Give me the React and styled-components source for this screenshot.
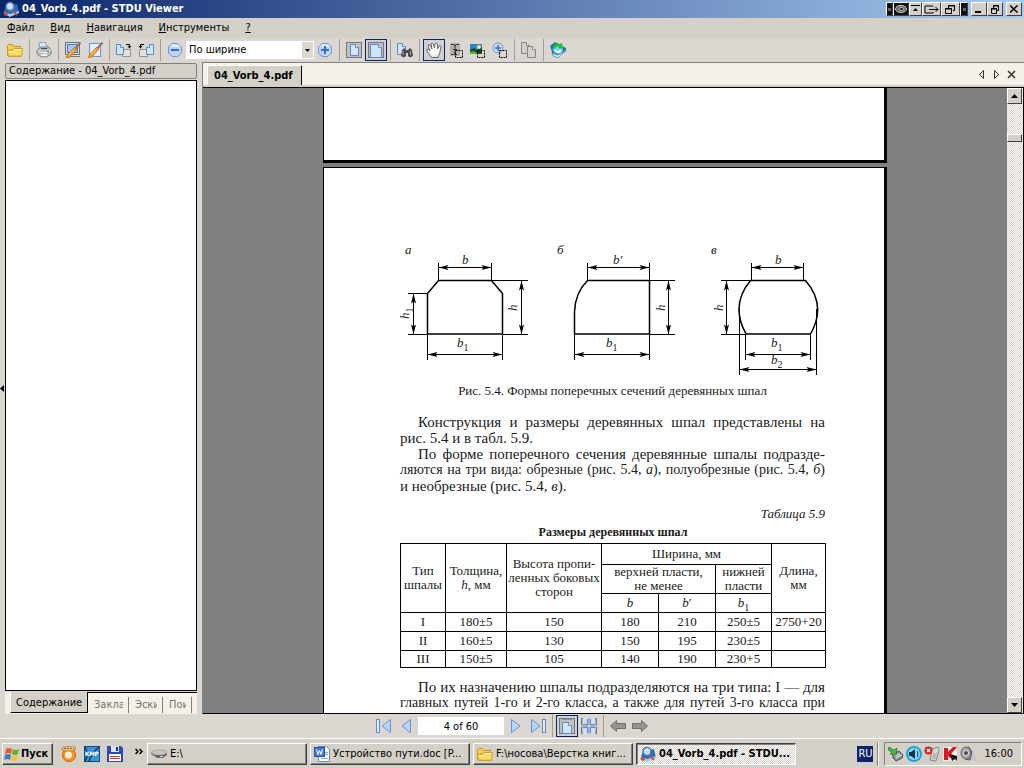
import React from 'react';
import styled, { createGlobalStyle } from 'styled-components';

const face = '#d4d0c8';
const bar = '#dbd6cf';
const cream = '#f5f0e8';
const shade = '#808080';
const checker = 'repeating-conic-gradient(#fff 0% 25%, #d4d0c8 0% 50%) 0 0 / 2px 2px';

const GlobalStyle = createGlobalStyle`
  * { box-sizing: border-box; }
  body { margin: 0; }
  body, button, input, select {
    font-family: 'DejaVu Sans Condensed', 'DejaVu Sans', Tahoma, sans-serif;
    font-size: 11px;
    line-height: 14px;
    color: #000;
  }
  button { border: 0; padding: 0; background: none; white-space: nowrap; }
  svg { display: block; flex: none; }
`;

const Window = styled.div`
  display: flex;
  flex-direction: column;
  height: 100vh;
  overflow: hidden;
  background: ${bar};
`;

/* title bar */

const TitleBar = styled.header`
  display: flex;
  align-items: center;
  gap: 3px;
  height: 18px;
  padding: 0 2px 0 3px;
  background: linear-gradient(90deg, #0a246a, #a6caf0);
`;

const Title = styled.h1`
  flex: 1;
  margin: 0;
  font-size: 11px;
  line-height: 16px;
  color: #fff;
  white-space: nowrap;
`;

const ButtonGroup = styled.div`
  display: flex;
`;

const CaptionButton = styled.button`
  display: flex;
  align-items: center;
  justify-content: center;
  width: ${({ $width }) => $width || 16}px;
  height: 14px;
  background: ${({ $dark }) => ($dark ? '#111' : face)};
  border: 1px solid;
  border-color: #fff #404040 #404040 #fff;
`;

/* menu and toolbar */

const MenuBar = styled.nav`
  display: flex;
  align-items: center;
  gap: 16px;
  height: 20px;
  padding: 0 7px;
  background: ${face};
`;

const Toolbar = styled.div`
  display: flex;
  align-items: center;
  height: 24px;
  padding-left: 4px;
  background: ${bar};
`;

const ToolButton = styled.button`
  display: flex;
  align-items: center;
  justify-content: center;
  width: 22px;
  height: 22px;
  border: 1px solid ${({ $active }) => ($active ? '#0a246a' : 'transparent')};
  background: ${({ $active }) => ($active ? '#d0d0d2' : 'transparent')};
`;

const Separator = styled.span`
  width: 1px;
  height: 22px;
  margin: 0 3px;
  background: #a09d98;
`;

const SelectBox = styled.div`
  position: relative;
  width: 128px;
  height: 18px;
`;

const ZoomSelect = styled.select`
  appearance: none;
  width: 100%;
  height: 18px;
  padding: 0 3px;
  border: 0;
  border-radius: 0;
  background: #fff;
`;

const SelectArrow = styled.span`
  position: absolute;
  top: 1px;
  right: 1px;
  display: flex;
  align-items: center;
  justify-content: center;
  width: 11px;
  height: 16px;
  background: ${bar};
  pointer-events: none;
`;

/* work area */

const Work = styled.main`
  display: flex;
  flex: 1;
  min-height: 0;
`;

const Collapse = styled.button`
  display: flex;
  align-items: center;
  width: 5px;
`;

const SidePanel = styled.aside`
  display: flex;
  flex-direction: column;
  width: 192px;
  margin-right: 5px;
  padding-top: 1px;
`;

const SideHeader = styled.div`
  height: 16px;
  padding-left: 3px;
  border: 1px solid ${shade};
  border-radius: 2px;
  background: ${face};
  white-space: nowrap;
`;

const SideTree = styled.div`
  flex: 1;
  margin: 1px 0;
  border: 1px solid #000;
  background: #fff;
`;

const SideTabs = styled.div`
  display: flex;
  height: 22px;
  padding-left: 5px;
  background: ${cream};
`;

const SideTab = styled.button`
  display: flex;
  align-items: center;
  flex: none;
  width: ${({ $width }) => $width}px;
  height: ${({ $active }) => ($active ? 21 : 22)}px;
  padding-top: 2px;
  padding-left: ${({ $active }) => ($active ? 5 : 6)}px;
  color: ${({ $active }) => ($active ? '#000' : '#77736c')};
  background: ${({ $active }) => ($active ? face : 'transparent')};
  border-style: solid;
  border-width: ${({ $active }) => ($active ? '0 1px 1px 1px' : '1px 0 0 0')};
  border-color: #000 #000 #000 ${({ $active }) => ($active ? '#fff' : '#000')};
`;

const TabText = styled.span`
  flex: 1;
  overflow: hidden;
  text-align: left;
`;

const TabDivider = styled.span`
  width: 1px;
  height: 16px;
  margin: 0 0 0 5px;
  background: ${shade};
`;

const TabFiller = styled.span`
  flex: 1;
  border-top: 1px solid #000;
`;

const DocPanel = styled.section`
  display: flex;
  flex-direction: column;
  flex: 1;
  min-width: 0;
  border-left: 1px solid ${shade};
`;

const DocTabs = styled.div`
  display: flex;
  align-items: flex-end;
  justify-content: space-between;
  height: 25px;
  padding: 0 8px 0 4px;
  border-top: 1px solid ${shade};
  border-bottom: 2px solid ${face};
  background: ${cream};
`;

const DocTab = styled.button`
  height: 20px;
  padding: 0 8px 0 6px;
  font-weight: bold;
  background: ${face};
  border-style: solid;
  border-width: 1px 1px 0 1px;
  border-color: #fff #000 #fff #fff;
`;

const DocActions = styled.div`
  display: flex;
  gap: 6px;
  align-self: center;
`;

const View = styled.div`
  display: flex;
  flex: 1;
  min-height: 0;
  border: solid #000;
  border-width: 1px 1px 1px 0;
  background: ${shade};
`;

const Pages = styled.div`
  flex: 1;
  display: flex;
  flex-direction: column;
  align-items: center;
  gap: 4px;
  overflow: hidden;
`;

const Sheet = styled.article`
  flex: none;
  width: 564px;
  border: solid #000;
  border-width: ${({ $first }) => ($first ? 0 : 1)}px 3px 3px 1px;
  padding: ${({ $first }) => ($first ? '72px 0 0' : '75px 59px 60px 76px')};
  background: #fff;
  font-family: 'Liberation Serif', 'Times New Roman', serif;
  font-size: 15px;
  line-height: 16px;
  color: #1a1a1a;
`;

const ScrollBar = styled.div`
  display: flex;
  flex-direction: column;
  width: 16px;
  background: ${checker};
`;

const raised = `
  border: 1px solid;
  border-color: #fff #404040 #404040 #fff;
  background: ${face};
`;

const ScrollButton = styled.button`
  display: flex;
  align-items: center;
  justify-content: center;
  width: 15px;
  height: 16px;
  ${raised}
`;

const ScrollTrack = styled.div`
  flex: 1;
  padding-top: 30px;
`;

const ScrollThumb = styled.div`
  width: 15px;
  height: 8px;
  ${raised}
`;

/* document */

const Caption = styled.figcaption`
  margin-top: 6px;
  font-size: 13px;
  text-align: center;
`;

const Figure = styled.figure`
  margin: 0;
`;

const Paragraph = styled.p`
  margin: ${({ $top }) => $top || 0}px 0 0;
  text-indent: 18px;
`;

const Line = styled.span`
  display: block;
  font-size: ${({ $tight }) => ($tight ? 14 : 15)}px;
  white-space: nowrap;
  text-align: justify;
  text-align-last: ${({ $last }) => ($last ? 'left' : 'justify')};

  & + & { text-indent: 0; }
`;

const TableNumber = styled.p`
  margin: 12px 0 0;
  font-size: 13px;
  font-style: italic;
  text-align: right;
`;

const SizeTable = styled.table`
  width: 425px;
  margin-top: 2px;
  table-layout: fixed;
  border-collapse: collapse;
  font-size: 13px;
  line-height: 14px;

  caption { height: 19px; font-size: 12px; line-height: 16px; font-weight: bold; }
  th, td {
    height: 19px;
    padding: 0;
    border: 1px solid #000;
    font-weight: normal;
    text-align: center;
    white-space: nowrap;
  }
  thead tr:first-child th { height: 21px; }
  tbody tr:last-child td { height: 17px; }
  sub { font-size: 10px; line-height: 1px; }
`;

/* page bar */

const PageBar = styled.div`
  display: flex;
  align-items: center;
  justify-content: center;
  height: 24px;
`;

const PageInput = styled.input`
  width: 86px;
  height: 18px;
  margin: 0 1px;
  border: 0;
  text-align: center;
  background: #fff;
`;

/* taskbar */

const TaskBar = styled.footer`
  display: flex;
  align-items: center;
  height: 30px;
  padding: 1px 2px 0;
  border-top: 1px solid #fff;
  background: ${face};
`;

const StartButton = styled.button`
  display: flex;
  align-items: center;
  gap: 1px;
  width: 51px;
  height: 22px;
  padding-left: 1px;
  font-weight: bold;
  ${raised}
  box-shadow: inset -1px -1px ${shade};
`;

const QuickLaunch = styled.div`
  display: flex;
  align-items: center;
  gap: 7px;
  width: 94px;
  padding-left: 8px;
`;

const QuickButton = styled.button`
  display: flex;
`;

const TaskList = styled.div`
  display: flex;
  flex: 1;
  gap: 3px;
  min-width: 0;
`;

const TaskButton = styled.button`
  display: flex;
  align-items: center;
  gap: 3px;
  width: 160px;
  height: 22px;
  padding: 0 3px;
  ${raised}
  box-shadow: inset -1px -1px ${shade};
  ${({ $active }) => $active && `
    font-weight: bold;
    background: ${checker};
    border-color: #404040 #fff #fff #404040;
    box-shadow: inset 1px 1px ${shade};
  `}
`;

const TaskText = styled.span`
  overflow: hidden;
  text-align: left;
`;

const Language = styled.button`
  width: 16px;
  height: 16px;
  color: #fff;
  background: #0a246a;
`;

const TrayGrip = styled.span`
  width: 2px;
  height: 24px;
  margin: 0 5px 0 4px;
  border-left: 1px solid ${shade};
  border-right: 1px solid #fff;
`;

const Tray = styled.div`
  display: flex;
  align-items: center;
  gap: 2px;
  height: 24px;
  padding: 0 8px 0 3px;
  border: 1px solid;
  border-color: ${shade} #fff #fff ${shade};

  time { padding-left: 6px; }
`;

/* icons */

const Svg = ({ w = 16, h = 16, children }) => (
  <svg width={w} height={h} viewBox={`0 0 ${w} ${h}`} aria-hidden="true">{children}</svg>
);

const PageShape = ({ x, y, w, h, gray }) => (
  <g fill={gray ? '#d4d0cc' : '#cfe6ff'} stroke={gray ? '#8a8886' : '#5f86d0'}>
    <path d={`M${x + 0.5} ${y + 0.5}H${x + w - 3.5}L${x + w - 0.5} ${y + 3.5}V${y + h - 0.5}H${x + 0.5}Z`} />
    <path d={`M${x + w - 3.5} ${y + 0.5}V${y + 3.5}H${x + w - 0.5}`} fill="#fff" />
  </g>
);

const AppIcon = () => (
  <Svg>
    <path d="M3 5L14 3L16 12L7 15L1 11Z" fill="#276eb8" />
    <path d="M1 11L7 13L16 10V12L7 16L1 13Z" fill="#9ed0f4" />
    <path d="M0 12L4 11L5 14L2 15Z" fill="#cf4238" />
    <path d="M9 9L14 14" stroke="#b45a50" strokeWidth="2" />
    <circle cx="7" cy="5.500" r="4" fill="#bfdcf8" stroke="#5973a4" strokeWidth="1.500" />
    <path d="M5 5Q6 3 8 3" stroke="#fff" fill="none" />
  </Svg>
);

const FolderIcon = () => (
  <Svg>
    <path d="M.5 13.500V3.500L1.500 2.500H5.500L7 4.500H13.500V8H3L1.500 13.500Z" fill="#f3cd50" stroke="#c8961c" />
    <path d="M1.500 14.500L.5 8.500H5.500L7 6.500H15.500L14.500 14.500Z" fill="#fbdc66" stroke="#cfa02a" />
    <path d="M2 9.500H6L7.500 7.500H14.500" stroke="#fff4b8" fill="none" />
    <path d="M2 13.500H14" stroke="#efc23e" />
  </Svg>
);

const PrinterIcon = () => (
  <Svg>
    <path d="M4 7L3 1L9 0L12 6Z" fill="#d9eaff" stroke="#7b98c8" />
    <path d="M1 8L5 5L13 5L15 8V12L11 15H5L1 12Z" fill="#b9babd" stroke="#88898d" />
    <path d="M2 8.500L6 10.500H11L14.500 8" stroke="#f4f4f4" fill="none" />
    <path d="M5 6.500H11" stroke="#4e5055" />
    <path d="M5 13H11" stroke="#eee" strokeWidth="2" />
    <path d="M11 9.500h2" stroke="#4c9a48" />
  </Svg>
);

const Brush = () => (
  <g>
    <path d="M15.500 0.500L9 8" stroke="#8d6c62" strokeWidth="2" />
    <path d="M10 5L12 7L5 15L1 16L3 12Z" fill="#f59a2c" stroke="#c9650d" strokeWidth=".7" />
    <path d="M9 8L4 13" stroke="#ffd089" />
  </g>
);

const EditScreenIcon = () => (
  <Svg>
    <rect x=".5" y=".5" width="14" height="12" fill="#dcdcdc" stroke="#6a7180" />
    <rect x="2.500" y="2.500" width="10" height="8" fill="#9cc9f8" stroke="#4a76b8" />
    <path d="M1 14.500H15" stroke="#777" />
    <Brush />
  </Svg>
);

const EditPageIcon = () => (
  <Svg>
    <rect x="2.500" y="1.500" width="11" height="13" fill="#e3f1ff" stroke="#6d95da" />
    <Brush />
  </Svg>
);

const RotateIcon = ({ left }) => (
  <Svg>
    <g transform={left ? 'translate(16 0) scale(-1 1)' : undefined}>
      <path d="M6.500 7.500H14.500V14.500H6.500Z" fill="#e6e3df" stroke="#96938e" />
      <PageShape x={0} y={2} w={8} h={11} />
      <path d="M10 2.500H13.500V5" stroke="#000" fill="none" />
      <path d="M11.500 4H15.500L13.500 6.500Z" />
    </g>
  </Svg>
);

const CircleIcon = ({ plus }) => (
  <Svg>
    <path d="M5 1.500H11L14.500 5V11L11 14.500H5L1.500 11V5Z" fill="#b8d6fb" stroke="#7496d4" />
    <path d="M5 2.500H11L13 5H3Z" fill="#e1efff" />
    <path d={plus ? 'M4 8H12M8 4V12' : 'M4 8H12'} stroke="#4169bd" strokeWidth="2" />
  </Svg>
);

const FitIcon = ({ wide }) => (
  <Svg>
    <rect x=".5" y=".5" width="15" height="15" fill="#c2bfbb" stroke="#77777a" />
    {wide ? <PageShape x={2} y={2} w={12} h={14} /> : <PageShape x={4} y={2} w={9} h={12} />}
  </Svg>
);

const FindIcon = () => (
  <Svg>
    <PageShape x={0} y={1} w={9} h={12} />
    <path d="M4 14L5 8L7 6L9 8H11L13 6L15 8L16 14L13 15.500L11 14V11H9V14L7 15.500Z" fill="#4b4b50" />
    <path d="M6 9V13M13.500 9V13" stroke="#aaa" />
  </Svg>
);

const HandIcon = () => (
  <Svg>
    <path d="M5 15L1 9Q0 7 2 7L4 9L2 4Q2 2 4 3L6 7L5 2Q6 0 7.500 2L8.500 6L9 2Q10 0 11.500 2V7L13 4Q15 3 15 5L13.500 12L12 15.500H6Z" fill="#fbfbfb" stroke="#686868" />
    <path d="M7 14H12L13 11" stroke="#c4c4c4" fill="none" />
  </Svg>
);

const SelectMark = () => (
  <rect x="7.500" y="8.500" width="7" height="7" fill="none" stroke="#000" strokeDasharray="2 1" />
);

const TextSelectIcon = () => (
  <Svg>
    <path d="M2 1H12V14H2Z" fill="#b5b2ae" />
    <path d="M3 2.500H5.500Q7 2.500 7 4V11Q7 12.500 5.500 12.500H3M11 2.500H8.500Q7 2.500 7 4M7 11V12.500H9M5 7.500H9" fill="none" stroke="#333" />
    <SelectMark />
  </Svg>
);

const ImageSelectIcon = () => (
  <Svg>
    <rect x="0" y="2" width="12" height="10" fill="#2f80d0" />
    <path d="M0 8L4 6L7 8L12 5V12H0Z" fill="#154d23" />
    <path d="M0 10L4 9L8 12H0Z" fill="#55b936" />
    <circle cx="9" cy="5" r="2" fill="#ffe88b" />
    <SelectMark />
  </Svg>
);

const ZoomSelectIcon = () => (
  <Svg>
    <circle cx="6" cy="6" r="5" fill="#c7ddfb" stroke="#7393cf" />
    <path d="M3 6H9M6 3V9" stroke="#4169bd" strokeWidth="1.500" />
    <SelectMark />
  </Svg>
);

const CopyIcon = () => (
  <Svg>
    <PageShape x={0} y={0} w={9} h={12} gray />
    <PageShape x={6} y={4} w={9} h={12} gray />
  </Svg>
);

const RefreshIcon = () => (
  <Svg>
    <path d="M0 4L5 0L16 6V9L8 15L3 13Z" fill="#2375ac" />
    <path d="M2 11L8 13L16 8L8 16L3 14Z" fill="#cceaf5" stroke="#3784b5" strokeWidth=".7" />
    <circle cx="8" cy="7" r="5" fill="#70d8ed" />
    <path d="M3 6Q5 0 10 2L12 1L13 7L8 6L9 4Q6 4 5 7Z" fill="#23bd31" />
    <path d="M5 8Q8 12 11 8" fill="none" stroke="#fff" strokeWidth="2" />
  </Svg>
);

const NavIcon = ({ end, flip }) => (
  <Svg>
    <g transform={flip ? 'translate(16 0) scale(-1 1)' : undefined}>
      {end && <rect x=".5" y="1.500" width="3" height="13" fill="#dcecff" stroke="#6488cd" />}
      <path d={end ? 'M14.500 1.500V14.500L6 8Z' : 'M12.500 1.500V14.500L4 8Z'} fill="#b7d5fb" stroke="#6f90d0" />
    </g>
  </Svg>
);

const SinglePageIcon = () => (
  <Svg>
    <rect x=".5" y=".5" width="15" height="15" fill="#c2bfbb" stroke="#77777a" />
    <path d="M3 1.500H13" stroke="#6d95da" />
    <PageShape x={3} y={4} w={10} h={12} />
  </Svg>
);

const GridIcon = () => (
  <Svg>
    <path d="M.5 .5H7.500V7.500H.5ZM8.500 .5H15.500V7.500H8.500ZM.5 8.500H7.500V15.500H.5ZM8.500 8.500H15.500V15.500H8.500Z" fill="#b5b3b2" stroke="#77777a" />
    <path d="M2 0H7V6H2ZM9 0H14V6H9ZM2 10H7V16H2ZM9 10H14V16H9Z" fill="#c7e1ff" />
    <path d="M2 6.500H7M9 6.500H14M2 9.500H7M9 9.500H14M6.500 1V6M9.500 1V6M6.500 10V15M9.500 10V15" stroke="#6089ce" />
    <path d="M0 8H16M8 0V16" stroke="#eee" />
  </Svg>
);

const HistoryIcon = ({ forward }) => (
  <Svg>
    <path
      transform={forward ? 'translate(16 0) scale(-1 1)' : undefined}
      d="M.5 8L6.500 2.500V5.500H15.500V10.500H6.500V13.500Z"
      fill="#969493"
      stroke="#6f6e6d"
    />
  </Svg>
);

const Triangle = ({ d, outline, w = 9, h = 9 }) => (
  <Svg w={w} h={h}>
    <path d={d} fill={outline ? 'none' : '#000'} stroke={outline ? '#333' : 'none'} />
  </Svg>
);

const WindowsIcon = () => (
  <Svg>
    <path d="M2 3Q5 1 8 3L7 8Q4 6 1 8Z" fill="#e85c30" />
    <path d="M9 3Q12 5 15 3L14 8Q11 10 8 8Z" fill="#5bb432" />
    <path d="M1 9Q4 7 7 9L6 14Q3 12 0 14Z" fill="#3979d3" />
    <path d="M8 9Q11 11 14 9L13 14Q10 16 7 14Z" fill="#f6c525" />
  </Svg>
);

const OrangeIcon = () => (
  <Svg>
    <circle cx="8" cy="9" r="6.500" fill="#f89526" stroke="#c35b07" />
    <path d="M1 4Q0 1 4 1L12 0Q16 1 14 4L11 5L4 5Z" fill="#e8c190" stroke="#a5702c" strokeWidth=".7" />
    <path d="M3 2.500H13" stroke="#a55d17" strokeDasharray="2 1" />
    <circle cx="7.500" cy="9" r="3.500" fill="#fff2d2" />
  </Svg>
);

const KmpIcon = () => (
  <Svg>
    <rect x=".5" y=".5" width="15" height="15" fill="#3a95d6" stroke="#124a80" />
    <path d="M1 1Q5 8 1 15M15 1Q7 8 5 15" fill="none" stroke="#0c3566" strokeWidth="1.500" />
    <text x="1" y="10" fill="#fff" fontSize="6" fontWeight="bold">KMP</text>
  </Svg>
);

const FloppyIcon = () => (
  <Svg>
    <path d="M0 0H14L16 2V16H0Z" fill="#2b48c4" />
    <rect x="4" y="0" width="8" height="6" fill="#dfe3f3" />
    <rect x="9" y="1" width="2" height="4" fill="#26357c" />
    <rect x="2" y="8" width="12" height="7" fill="#fff" />
    <path d="M3 10.500H13M3 12.500H13" stroke="#cf3c38" />
  </Svg>
);

const DriveIcon = () => (
  <Svg>
    <path d="M0 6L5 4H13L16 6L12 9H4Z" fill="#c5c5c5" stroke="#999" strokeWidth=".7" />
    <path d="M0 7L4 9H12L16 7V9L12 12H6L0 8Z" fill="#69696b" />
    <path d="M9 10.500h3" stroke="#ddd" />
  </Svg>
);

const WordIcon = () => (
  <Svg>
    <path d="M4.500 .5H12.500L15.500 3.500V15.500H4.500Z" fill="#fff" stroke="#6488c6" />
    <path d="M10 6.500H14M10 8.500H14M7 12.500H14" stroke="#91a8d4" />
    <rect x=".5" y="1.500" width="10" height="9" fill="#4a7dd6" stroke="#214e9f" />
    <path d="M2.500 3.500L4 8.500L5.500 4.500L7 8.500L8.500 3.500" fill="none" stroke="#fff" />
  </Svg>
);

const PlugIcon = () => (
  <Svg>
    <path d="M5 8L11 5L15 9L14 12L8 15L5 12Z" fill="#8e9197" stroke="#484b50" />
    <path d="M7 10L12 8M8 12L14 9" stroke="#f3f3f3" />
    <path d="M1 1L6 4L9 2L8 9L2 8L4 6L0 4Z" fill="#48b742" stroke="#207925" strokeWidth=".7" />
  </Svg>
);

const SoundIcon = () => (
  <Svg>
    <circle cx="8" cy="8" r="8" fill="#20a2dd" />
    <circle cx="8" cy="8" r="6" fill="#8bdcf6" />
    <path d="M3 6H5L9 3V13L5 10H3Z" fill="#14314f" />
    <path d="M11 5Q13 8 11 11" fill="none" stroke="#14314f" />
  </Svg>
);

const DeviceIcon = () => (
  <Svg>
    <path d="M8 3L14 1L15 4L12 15L6 14Z" fill="#d6d6d4" stroke="#858585" />
    <path d="M8 10H12M8 12H12M9 8H13" stroke="#9a9a98" />
    <circle cx="4.500" cy="4.500" r="4" fill="#d32020" />
    <path d="M3 3L6 6M6 3L3 6" stroke="#fff" strokeWidth="1.500" />
  </Svg>
);

const KasperskyIcon = () => (
  <Svg>
    <rect x="1" y="1" width="14" height="14" fill="#f5eeee" />
    <path d="M2 2H6V6L11 1H15L9 8L12 12H8L6 10V14H2Z" fill="#df171d" />
    <path d="M8 8L15 10V15L13 13L10 15Z" fill="#151515" />
  </Svg>
);

const SpeakerIcon = () => (
  <Svg>
    <path d="M4 3L9 1L12 6L10 14L5 13Z" fill="#8c8c8d" stroke="#5d5d60" />
    <ellipse cx="6" cy="7" rx="5" ry="6" fill="#a6a6a9" stroke="#606064" />
    <circle cx="6" cy="7" r="2.500" fill="#46464a" stroke="#eee" />
    <path d="M12 9Q14 12 12 14M14 9Q16 12 14 15" fill="none" stroke="#a8b5e2" />
  </Svg>
);

/* cross-section drawing */

const HorizontalDim = ({ x1, x2, y }) => (
  <>
    <path d={`M${x1} ${y}H${x2}`} />
    <path fill="#000" stroke="none" d={`M${x1} ${y}l10 -2.500l-2 2.500l2 2.500ZM${x2} ${y}l-10 -2.500l2 2.500l-2 2.500Z`} />
  </>
);

const VerticalDim = ({ y1, y2, x }) => (
  <>
    <path d={`M${x} ${y1}V${y2}`} />
    <path fill="#000" stroke="none" d={`M${x} ${y1}l-2.500 10l2.500 -2l2.500 2ZM${x} ${y2}l-2.500 -10l2.500 2l2.500 -2Z`} />
  </>
);

const DrawingText = styled.g`
  fill: #1a1a1a;
  stroke: none;
  font-size: 13px;
  font-style: italic;

  .sub { font-size: 10px; font-style: normal; }
`;

const Label = ({ x, y, sub, up, children }) => (
  <text x={x} y={y} transform={up ? `rotate(-90 ${x} ${y})` : undefined}>
    {children}
    {sub && <tspan className="sub" dy="4">{sub}</tspan>}
  </text>
);

const Sections = () => (
  <svg width="425" height="134" viewBox="0 0 425 134" role="img" aria-label="Формы поперечных сечений">
    <g fill="none" stroke="#000">
      <path strokeWidth="1.500" d="M38.500 37.500H91.500L102.500 50.500V91H27.500V50.500Z" />
      <path d="M38.500 20V37M91.500 20V37M91 37.500H128M102 91.500H128M8 50.500H27M8 91.500H27M27.500 91V117M102.500 91V117" />
      <HorizontalDim x1={38.5} x2={91.5} y={24.5} />
      <HorizontalDim x1={27.5} x2={102.5} y={111.5} />
      <VerticalDim y1={37.5} y2={91.5} x={121.5} />
      <VerticalDim y1={50.5} y2={91.5} x={13.5} />

      <path strokeWidth="1.500" d="M187.500 37.500H249.500V91H174.500V69Q175 50 187.500 37.500Z" />
      <path d="M187.500 20V37M249.500 20V37M249 37.500H275M249 91.500H275M174.500 91V117M249.500 91V117" />
      <HorizontalDim x1={187.5} x2={249.5} y={24.5} />
      <HorizontalDim x1={174.5} x2={249.5} y={111.5} />
      <VerticalDim y1={37.5} y2={91.5} x={268.5} />

      <path strokeWidth="1.500" d="M350.500 37.500H405.500Q427 62 410.500 91H346Q330 62 350.500 37.500Z" />
      <path d="M351.500 20V37M403.500 20V37M321 37.500H350M321 91.500H346M345.500 91V117M410.500 91V117M339.500 66V132M416.500 66V132" />
      <HorizontalDim x1={351.5} x2={403.5} y={24.5} />
      <HorizontalDim x1={345.5} x2={410.5} y={111.5} />
      <HorizontalDim x1={339.5} x2={416.5} y={126.5} />
      <VerticalDim y1={37.5} y2={91.5} x={326.5} />
    </g>
    <DrawingText>
      <Label x={5} y={11}>а</Label>
      <Label x={62} y={21}>b</Label>
      <Label x={57} y={104} sub="1">b</Label>
      <Label x={117} y={68} up>h</Label>
      <Label x={9} y={76} sub="1" up>h</Label>
      <Label x={157} y={11}>б</Label>
      <Label x={213} y={21}>b′</Label>
      <Label x={206} y={104} sub="1">b</Label>
      <Label x={265} y={68} up>h</Label>
      <Label x={311} y={11}>в</Label>
      <Label x={375} y={21}>b</Label>
      <Label x={371} y={104} sub="1">b</Label>
      <Label x={371} y={121} sub="2">b</Label>
      <Label x={323} y={68} up>h</Label>
    </DrawingText>
  </svg>
);

const sizes = [
  ['I', '180±5', '150', '180', '210', '250±5', '2750+20'],
  ['II', '160±5', '130', '150', '195', '230±5', ''],
  ['III', '150±5', '105', '140', '190', '230+5', ''],
];

const columnWidths = [45, 61, 95, 57, 57, 56, 54];

const Sizes = () => (
  <SizeTable>
    <caption>Размеры деревянных шпал</caption>
    <colgroup>
      {columnWidths.map((width, i) => <col key={i} width={width} />)}
    </colgroup>
    <thead>
      <tr>
        <th rowSpan={3}>Тип<br />шпалы</th>
        <th rowSpan={3}>Толщина,<br /><i>h</i>, мм</th>
        <th rowSpan={3}>Высота пропи-<br />ленных боковых<br />сторон</th>
        <th colSpan={3}>Ширина, мм</th>
        <th rowSpan={3}>Длина,<br />мм</th>
      </tr>
      <tr>
        <th colSpan={2}>верхней пласти,<br />не менее</th>
        <th>нижней<br />пласти</th>
      </tr>
      <tr>
        <th><i>b</i></th>
        <th><i>b</i>′</th>
        <th><i>b</i><sub>1</sub></th>
      </tr>
    </thead>
    <tbody>
      {sizes.map((row) => (
        <tr key={row[0]}>
          {row.map((value, i) => <td key={i}>{value}</td>)}
        </tr>
      ))}
    </tbody>
  </SizeTable>
);

const menus = ['Файл', 'Вид', 'Навигация', 'Инструменты', '?'];

const Tool = ({ label, active, children }) => (
  <ToolButton type="button" aria-label={label} title={label} $active={active}>{children}</ToolButton>
);

const WindowButtons = () => (
  <>
    <ButtonGroup>
      <CaptionButton aria-label="Захват слева" $width={7} $dark><Svg w={3} h={5}><path d="M0 1H3V4H0Z" fill="#666" /></Svg></CaptionButton>
      <CaptionButton aria-label="NVIDIA" $width={16} $dark>
        <Svg w={12} h={8}>
          <ellipse cx="6" cy="4" rx="5.500" ry="3.500" fill="#666" stroke="#ccc" />
          <ellipse cx="6.500" cy="4" rx="2.500" ry="1.500" fill="#222" stroke="#bbb" />
        </Svg>
      </CaptionButton>
      <CaptionButton aria-label="Свернуть в заголовок" $width={13}><Svg w={9} h={8}><path d="M0 0H9V1H0ZM4.500 3L7 6H2Z" /></Svg></CaptionButton>
      <CaptionButton aria-label="На другой экран" $width={19}>
        <Svg w={15} h={9}><path d="M9 1.500V1H1V8H9V7M5 4.500H14M11.500 2L14 4.500L11.500 7" fill="none" stroke="#000" /></Svg>
      </CaptionButton>
      <CaptionButton aria-label="На все экраны" $width={19}>
        <Svg w={11} h={9}><path d="M3.500 3V.5H9.500V5.500H8M.5 3.500H6.500V8.500H.5ZM0 4H7M3 1H10" fill="none" stroke="#000" /></Svg>
      </CaptionButton>
      <CaptionButton aria-label="Захват справа" $width={8} $dark><Svg w={3} h={5}><path d="M0 1H3V4H0Z" fill="#666" /></Svg></CaptionButton>
    </ButtonGroup>
    <ButtonGroup>
      <CaptionButton aria-label="Свернуть"><Svg w={10} h={8}><path d="M1 6H7V8H1Z" /></Svg></CaptionButton>
      <CaptionButton aria-label="Восстановить">
        <Svg w={9} h={9}><path d="M2.500 3V.5H7.500V5.500H6M.5 3.500H5.500V8.500H.5ZM2 1H8M0 4H6" fill="none" stroke="#000" /></Svg>
      </CaptionButton>
    </ButtonGroup>
    <CaptionButton aria-label="Закрыть"><Svg w={8} h={8}><path d="M0 .5L7.500 7.500M7.500 .5L0 7.500" stroke="#000" strokeWidth="1.500" /></Svg></CaptionButton>
  </>
);

const MainToolbar = () => (
  <Toolbar role="toolbar">
    <Tool label="Открыть"><FolderIcon /></Tool>
    <Separator />
    <Tool label="Печать"><PrinterIcon /></Tool>
    <Separator />
    <Tool label="Настройка экрана"><EditScreenIcon /></Tool>
    <Tool label="Настройка страницы"><EditPageIcon /></Tool>
    <Separator />
    <Tool label="Повернуть вправо"><RotateIcon /></Tool>
    <Tool label="Повернуть влево"><RotateIcon left /></Tool>
    <Separator />
    <Tool label="Уменьшить"><CircleIcon /></Tool>
    <SelectBox>
      <ZoomSelect aria-label="Масштаб" defaultValue="width">
        <option value="width">По ширине</option>
        <option value="page">По странице</option>
      </ZoomSelect>
      <SelectArrow><Triangle w={5} h={3} d="M0 0H5L2.500 3Z" /></SelectArrow>
    </SelectBox>
    <Tool label="Увеличить"><CircleIcon plus /></Tool>
    <Separator />
    <Tool label="Страница целиком"><FitIcon /></Tool>
    <Tool label="По ширине" active><FitIcon wide /></Tool>
    <Separator />
    <Tool label="Найти"><FindIcon /></Tool>
    <Separator />
    <Tool label="Рука" active><HandIcon /></Tool>
    <Tool label="Выделить текст"><TextSelectIcon /></Tool>
    <Tool label="Выделить рисунок"><ImageSelectIcon /></Tool>
    <Tool label="Увеличить область"><ZoomSelectIcon /></Tool>
    <Separator />
    <Tool label="Копировать"><CopyIcon /></Tool>
    <Separator />
    <Tool label="Обновить"><RefreshIcon /></Tool>
  </Toolbar>
);

const Sidebar = () => (
  <SidePanel>
    <SideHeader>Содержание - 04_Vorb_4.pdf</SideHeader>
    <SideTree />
    <SideTabs>
      <SideTab $active $width={78}>Содержание</SideTab>
      <SideTab $width={41}><TabText>Закладки</TabText><TabDivider /></SideTab>
      <SideTab $width={34}><TabText>Эскизы</TabText><TabDivider /></SideTab>
      <SideTab $width={29}><TabText>Поиск</TabText><TabDivider /></SideTab>
      <TabFiller />
    </SideTabs>
  </SidePanel>
);

const DocumentPage = () => (
  <Sheet>
    <Figure>
      <Sections />
      <Caption>Рис. 5.4. Формы поперечных сечений деревянных шпал</Caption>
    </Figure>
    <Paragraph $top={15}>
      <Line>Конструкция и размеры деревянных шпал представлены на</Line>
      <Line $last>рис. 5.4 и в табл. 5.9.</Line>
    </Paragraph>
    <Paragraph>
      <Line>По форме поперечного сечения деревянные шпалы подразде-</Line>
      <Line $tight>ляются на три вида: обрезные (рис. 5.4, <i>а</i>), полуобрезные (рис. 5.4, <i>б</i>)</Line>
      <Line $last>и необрезные (рис. 5.4, <i>в</i>).</Line>
    </Paragraph>
    <TableNumber>Таблица 5.9</TableNumber>
    <Sizes />
    <Paragraph $top={11}>
      <Line>По их назначению шпалы подразделяются на три типа: I — для</Line>
      <Line $tight>главных путей 1-го и 2-го класса, а также для путей 3-го класса при</Line>
    </Paragraph>
  </Sheet>
);

const App = () => (
  <>
    <GlobalStyle />
    <Window>
      <TitleBar>
        <AppIcon />
        <Title>04_Vorb_4.pdf - STDU Viewer</Title>
        <WindowButtons />
      </TitleBar>
      <MenuBar>
        {menus.map((name) => (
          <button type="button" key={name}><u>{name[0]}</u>{name.slice(1)}</button>
        ))}
      </MenuBar>
      <MainToolbar />
      <Work>
        <Collapse aria-label="Скрыть панель"><Triangle w={4} h={7} d="M4 0V7L0 3.500Z" /></Collapse>
        <Sidebar />
        <DocPanel>
          <DocTabs>
            <DocTab type="button">04_Vorb_4.pdf</DocTab>
            <DocActions>
              <button type="button" aria-label="Предыдущая вкладка"><Triangle outline d="M6.500 .5V8.500L2.500 4.500Z" /></button>
              <button type="button" aria-label="Следующая вкладка"><Triangle outline d="M2.500 .5V8.500L6.500 4.500Z" /></button>
              <button type="button" aria-label="Закрыть вкладку"><Svg w={9} h={9}><path d="M1 1L8 8M8 1L1 8" stroke="#333" strokeWidth="1.500" /></Svg></button>
            </DocActions>
          </DocTabs>
          <View>
            <Pages>
              <Sheet $first />
              <DocumentPage />
            </Pages>
            <ScrollBar>
              <ScrollButton aria-label="Вверх"><Triangle w={7} h={4} d="M0 4H7L3.500 0Z" /></ScrollButton>
              <ScrollTrack><ScrollThumb /></ScrollTrack>
              <ScrollButton aria-label="Вниз"><Triangle w={7} h={4} d="M0 0H7L3.500 4Z" /></ScrollButton>
            </ScrollBar>
          </View>
        </DocPanel>
      </Work>
      <PageBar>
        <Tool label="Первая страница"><NavIcon end /></Tool>
        <Tool label="Предыдущая страница"><NavIcon /></Tool>
        <PageInput aria-label="Страница" defaultValue="4 of 60" />
        <Tool label="Следующая страница"><NavIcon flip /></Tool>
        <Tool label="Последняя страница"><NavIcon end flip /></Tool>
        <Separator />
        <Tool label="Одна страница" active><SinglePageIcon /></Tool>
        <Tool label="Несколько страниц"><GridIcon /></Tool>
        <Separator />
        <Tool label="Назад"><HistoryIcon /></Tool>
        <Tool label="Вперёд"><HistoryIcon forward /></Tool>
      </PageBar>
      <TaskBar>
        <StartButton type="button"><WindowsIcon />Пуск</StartButton>
        <QuickLaunch>
          <QuickButton aria-label="Почта"><OrangeIcon /></QuickButton>
          <QuickButton aria-label="Плеер"><KmpIcon /></QuickButton>
          <QuickButton aria-label="Диск"><FloppyIcon /></QuickButton>
          <QuickButton aria-label="Ещё">
            <Svg w={16}><path d="M5.500 3L8 5.500L5.500 8M9.500 3L12 5.500L9.500 8" fill="none" stroke="#000" strokeWidth="1.500" /></Svg>
          </QuickButton>
        </QuickLaunch>
        <TaskList>
          <TaskButton><DriveIcon /><TaskText>E:\</TaskText></TaskButton>
          <TaskButton><WordIcon /><TaskText>Устройство пути.doc [P...</TaskText></TaskButton>
          <TaskButton><FolderIcon /><TaskText>F:\носова\Верстка книг...</TaskText></TaskButton>
          <TaskButton $active><AppIcon /><TaskText>04_Vorb_4.pdf - STDU...</TaskText></TaskButton>
        </TaskList>
        <Language type="button">RU</Language>
        <TrayGrip />
        <Tray>
          <PlugIcon />
          <SoundIcon />
          <DeviceIcon />
          <KasperskyIcon />
          <SpeakerIcon />
          <time>16:00</time>
        </Tray>
      </TaskBar>
    </Window>
  </>
);

export default App;
